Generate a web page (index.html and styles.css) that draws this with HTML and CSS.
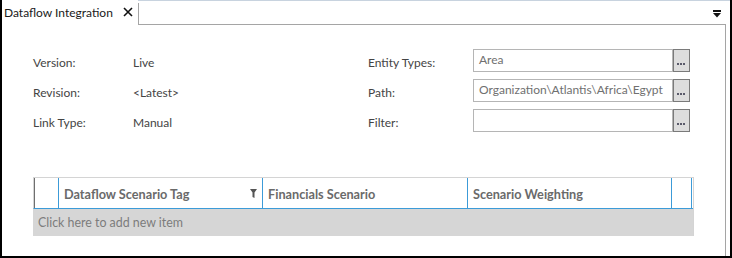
FILE: index.html
```html
<!DOCTYPE html>
<html lang="en">
<head>
    <meta charset="UTF-8">
    <title>Dataflow Integration</title>
    <link rel="stylesheet" href="styles.css">
</head>
<body>
    <div class="window">
        <div class="tabstrip">
            <div class="tab">
                <span class="tab-title">Dataflow Integration</span>
                <svg class="tab-close" width="10" height="10" viewBox="0 0 10 10">
                    <path d="M1 1 L9 9 M9 1 L1 9" stroke="#111" stroke-width="1.6" fill="none"/>
                </svg>
            </div>
            <div class="strip-fill">
                <div class="strip-inner">
                    <svg class="menu-icon" width="8" height="8" viewBox="0 0 8 8">
                        <rect x="0" y="0" width="8" height="2" fill="#111"/>
                        <polygon points="0,3 8,3 4,7.5" fill="#111"/>
                    </svg>
                </div>
            </div>
        </div>

        <div class="panel">
            <div class="form">
                <div class="form-row">
                    <span class="label">Version:</span>
                    <span class="value">Live</span>
                    <span class="label label-right">Entity Types:</span>
                    <div class="picker">
                        <div class="picker-box">Area</div>
                        <div class="picker-btn">
                            <svg width="15" height="21" viewBox="0 0 15 21">
                                <rect x="3" y="13" width="2" height="2" fill="#5a5a6a"/>
                                <rect x="6" y="13" width="2" height="2" fill="#5a5a6a"/>
                                <rect x="9" y="13" width="2" height="2" fill="#5a5a6a"/>
                            </svg>
                        </div>
                    </div>
                </div>
                <div class="form-row">
                    <span class="label">Revision:</span>
                    <span class="value">&lt;Latest&gt;</span>
                    <span class="label label-right">Path:</span>
                    <div class="picker">
                        <div class="picker-box">Organization\Atlantis\Africa\Egypt</div>
                        <div class="picker-btn">
                            <svg width="15" height="21" viewBox="0 0 15 21">
                                <rect x="3" y="13" width="2" height="2" fill="#5a5a6a"/>
                                <rect x="6" y="13" width="2" height="2" fill="#5a5a6a"/>
                                <rect x="9" y="13" width="2" height="2" fill="#5a5a6a"/>
                            </svg>
                        </div>
                    </div>
                </div>
                <div class="form-row">
                    <span class="label">Link Type:</span>
                    <span class="value">Manual</span>
                    <span class="label label-right">Filter:</span>
                    <div class="picker">
                        <div class="picker-box"></div>
                        <div class="picker-btn">
                            <svg width="15" height="21" viewBox="0 0 15 21">
                                <rect x="3" y="13" width="2" height="2" fill="#5a5a6a"/>
                                <rect x="6" y="13" width="2" height="2" fill="#5a5a6a"/>
                                <rect x="9" y="13" width="2" height="2" fill="#5a5a6a"/>
                            </svg>
                        </div>
                    </div>
                </div>
            </div>

            <div class="grid">
                <div class="grid-head">
                    <div class="col col-indicator"></div>
                    <div class="col">
                        Dataflow Scenario Tag
                        <svg class="filter-icon" width="7" height="9" viewBox="0 0 7 9">
                            <polygon points="0,0 7,0 4.5,3.5 4.5,9 2.5,8 2.5,3.5" fill="#555"/>
                        </svg>
                    </div>
                    <div class="col">Financials Scenario</div>
                    <div class="col">Scenario Weighting</div>
                    <div class="col"></div>
                </div>
                <div class="grid-new">Click here to add new item</div>
            </div>
        </div>
    </div>
</body>
</html>
```

FILE: styles.css
```css
/* General Reset */
* {
    margin: 0;
    padding: 0;
    box-sizing: border-box;
}

body {
    font-family: "Segoe UI", Lato, "Open Sans", sans-serif;
    font-size: 12px;
    color: #444444;
    background-color: #ffffff;
    width: 732px;
    height: 258px;
    overflow: hidden;
}

/* Window frame */
.window {
    width: 732px;
    height: 258px;
    border-left: 2px solid #000000;
    border-right: 2px solid #000000;
    border-bottom: 2px solid #000000;
    display: flex;
    flex-direction: column;
}

/* Tab strip */
.tabstrip {
    display: flex;
    height: 25px;
}

.tab {
    width: 136px;
    display: flex;
    align-items: center;
    padding-left: 2px;
    padding-bottom: 1px;
    color: #1a1a1a;
}

.tab-close {
    margin-left: auto;
    margin-right: 5px;
}

.strip-fill {
    flex: 1;
    display: flex;
    border-top: 1px solid #c8d3df;
}

.strip-inner {
    flex: 1;
    display: flex;
    justify-content: flex-end;
    align-items: flex-start;
    margin-top: 2px;
    margin-right: 4px;
    padding-top: 7px;
    padding-right: 5px;
    border-left: 1px solid #a5a5a5;
    border-bottom: 1px solid #a5a5a5;
}

/* Content panel */
.panel {
    flex: 1;
    margin-right: 4px;
    border-right: 1px solid #a5a5a5;
    padding: 24px 0 0 31px;
}

.form {
    display: flex;
    flex-direction: column;
    gap: 7px;
}

.form-row {
    display: flex;
    height: 23px;
}

.label,
.value {
    padding-top: 4px;
    line-height: 19px;
}

.label {
    width: 100px;
}

.value {
    width: 235px;
}

.label-right {
    width: 105px;
}

.picker {
    display: flex;
}

.picker-box {
    width: 200px;
    height: 23px;
    border: 1px solid #b5b5b5;
    padding-left: 5px;
    line-height: 19px;
    color: #707070;
}

.picker-btn {
    width: 17px;
    height: 23px;
    border: 1px solid #7a7a7a;
    background-color: #dddddd;
}

.picker-btn svg {
    display: block;
}

/* Grid */
.grid {
    width: 661px;
    margin-top: 45px;
    border-top: 1px solid #d4d4d4;
    border-right: 1px solid #d4d4d4;
}

.grid-head {
    display: grid;
    grid-template-columns: 25px 204px 205px 204px 20px;
    height: 31px;
    border-left: 1px solid #d4d4d4;
    border-bottom: 1px solid #3c9bd8;
}

.col {
    display: flex;
    align-items: center;
    padding: 2px 0 0 5px;
    border-right: 1px solid #3c9bd8;
    font-size: 12.7px;
    font-weight: 700;
    color: #6a6a6a;
}

.col-indicator {
    border-left: 1px solid #6f6f6f;
}

.filter-icon {
    margin-left: auto;
    margin-right: 5px;
    margin-bottom: 2px;
}

.grid-new {
    height: 27px;
    line-height: 27px;
    padding-left: 5px;
    background-color: #d6d6d6;
    color: #7c7c7c;
    font-size: 12.4px;
}
```
